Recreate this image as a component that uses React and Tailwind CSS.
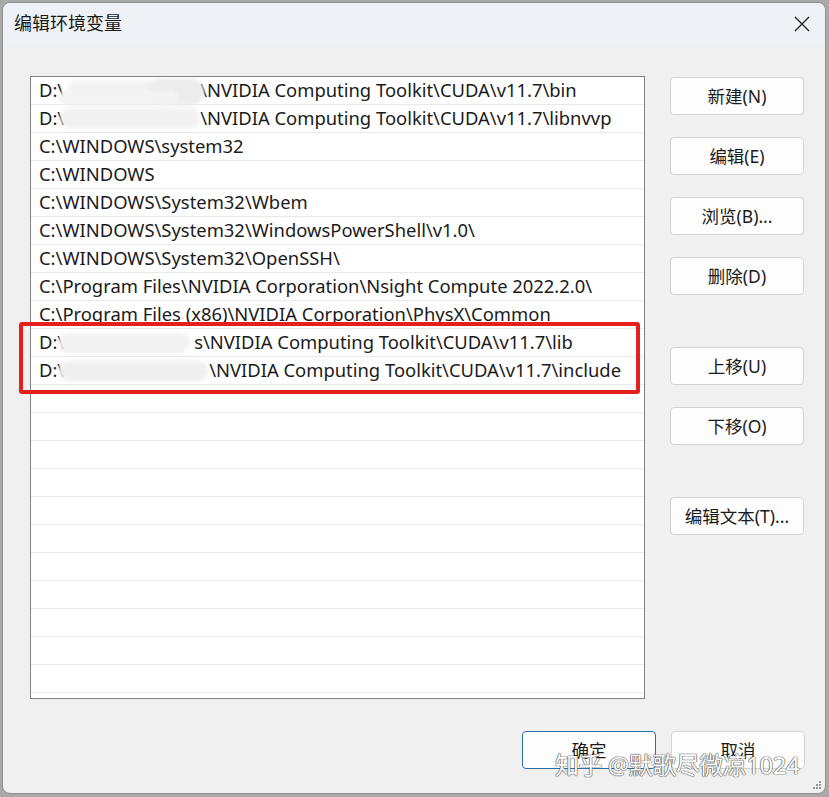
import React from "react";

const FONT = { fontFamily: '"Noto Sans", "Noto Sans CJK SC", sans-serif' };

const rows = [
  { blur: true, pre: "D:\\", gap: 136, rest: "\\NVIDIA Computing Toolkit\\CUDA\\v11.7\\bin", blob: "a" },
  { blur: true, pre: "D:\\", gap: 136, rest: "\\NVIDIA Computing Toolkit\\CUDA\\v11.7\\libnvvp", blob: "b" },
  { text: "C:\\WINDOWS\\system32" },
  { text: "C:\\WINDOWS" },
  { text: "C:\\WINDOWS\\System32\\Wbem" },
  { text: "C:\\WINDOWS\\System32\\WindowsPowerShell\\v1.0\\" },
  { text: "C:\\WINDOWS\\System32\\OpenSSH\\" },
  { text: "C:\\Program Files\\NVIDIA Corporation\\Nsight Compute 2022.2.0\\" },
  { text: "C:\\Program Files (x86)\\NVIDIA Corporation\\PhysX\\Common" },
  { blur: true, pre: "D:\\", gap: 130, rest: "s\\NVIDIA Computing Toolkit\\CUDA\\v11.7\\lib", blob: "c" },
  { blur: true, pre: "D:\\", gap: 145, rest: "\\NVIDIA Computing Toolkit\\CUDA\\v11.7\\include", blob: "d" },
];

const TOTAL_ROWS = 22;

function Blob({ kind }) {
  if (kind === "a") {
    return (
      <span className="absolute left-[-6px] top-[0px] h-[30px] w-[150px]">
        <span className="absolute left-[10px] top-[4px] h-[12px] w-[130px] rounded-full bg-[#f1f1f1] blur-[2px]" />
        <span className="absolute left-[90px] top-[2px] h-[26px] w-[56px] rounded-full bg-[#ececec] blur-[2px]" />
        <span className="absolute left-[0px] top-[14px] h-[14px] w-[120px] rounded-full bg-[#f3f3f3] blur-[2px]" />
      </span>
    );
  }
  if (kind === "b") {
    return <span className="absolute left-[-4px] top-[3px] h-[20px] w-[140px] rounded-full bg-[#f1f1f1] blur-[2px]" />;
  }
  if (kind === "c") {
    return <span className="absolute left-[-6px] top-[4px] h-[20px] w-[132px] rounded-full bg-[#f2f2f2] blur-[2px]" />;
  }
  return <span className="absolute left-[-6px] top-[4px] h-[20px] w-[150px] rounded-full bg-[#efefef] blur-[2px]" />;
}

function Row({ r }) {
  return (
    <div className="flex h-[28px] shrink-0 items-center border-b border-[#e9e9e9] pl-[8px] text-[18.4px] leading-none text-[#1b1b1b] whitespace-nowrap">
      {r ? (
        r.blur ? (
          <>
            <span>{r.pre}</span>
            <span className="relative inline-block h-[28px]" style={{ width: r.gap }}>
              <Blob kind={r.blob} />
            </span>
            <span>{r.rest}</span>
          </>
        ) : (
          <span>{r.text}</span>
        )
      ) : null}
    </div>
  );
}

function Btn({ children, primary }) {
  return (
    <div
      className={
        "flex h-[38px] w-[134px] shrink-0 items-center justify-center rounded-[4px] bg-[#fdfdfd] text-[17.5px] text-[#1b1b1b] " +
        (primary ? "border border-[#2a6fa8]" : "border border-[#d3d3d3]")
      }
    >
      {children}
    </div>
  );
}

export default function App() {
  const all = Array.from({ length: TOTAL_ROWS }, (_, i) => rows[i]);
  return (
    <div className="h-[797px] w-[829px] overflow-hidden bg-[#a9a9a9] p-[2px] pr-[3px] pb-[3px]" style={FONT}>
      <div className="relative flex h-full w-full flex-col overflow-hidden rounded-[8px] border border-[#8e8e8e] bg-[#f0f0f0]">
        {/* title bar */}
        <div className="flex h-[41px] shrink-0 items-center justify-between bg-[#eef2f6] pl-[11px] pr-[14px]">
          <span className="text-[18px] text-[#1a1a1a]">编辑环境变量</span>
          <svg width="18" height="18" viewBox="0 0 18 18" className="mt-[1px]">
            <path d="M2 2 L16 16 M16 2 L2 16" stroke="#222" strokeWidth="1.4" fill="none" />
          </svg>
        </div>
        {/* body */}
        <div className="flex flex-1 flex-col pl-[27px] pr-[20px] pt-[32px]">
          <div className="flex">
            <div className="relative">
              <div className="flex h-[623px] w-[615px] flex-col overflow-hidden border border-[#838383] bg-white">
                {all.map((r, i) => (
                  <Row key={i} r={r} />
                ))}
              </div>
              {/* red annotation */}
              <div className="pointer-events-none absolute left-[-11px] top-[246px] h-[72px] w-[621px] rounded-[3px] border-[4px] border-[#e3201b]" />
            </div>
            <div className="ml-[25px] flex flex-col pt-[1px]">
              <Btn>新建(N)</Btn>
              <div className="h-[22px]" />
              <Btn>编辑(E)</Btn>
              <div className="h-[22px]" />
              <Btn>浏览(B)...</Btn>
              <div className="h-[22px]" />
              <Btn>删除(D)</Btn>
              <div className="h-[52px]" />
              <Btn>上移(U)</Btn>
              <div className="h-[22px]" />
              <Btn>下移(O)</Btn>
              <div className="h-[52px]" />
              <Btn>编辑文本(T)...</Btn>
            </div>
          </div>
          <div className="mt-[32px] flex justify-end gap-[15px]">
            <Btn primary>确定</Btn>
            <Btn>取消</Btn>
          </div>
        </div>
        {/* watermark */}
        <div className="pointer-events-none absolute left-[552px] top-[744px] whitespace-nowrap text-[24px] tracking-[-0.5px] text-white [text-shadow:0_0_1px_#444,0_0_1px_#444,0_0_1px_#444]">
          知乎 @默歌尽微凉1024
        </div>
        {/* resize grip */}
        <svg className="absolute bottom-[3px] right-[3px]" width="10" height="10" viewBox="0 0 10 10">
          <rect x="7" y="1" width="2" height="2" fill="#999" />
          <rect x="4" y="4" width="2" height="2" fill="#999" />
          <rect x="7" y="4" width="2" height="2" fill="#999" />
          <rect x="1" y="7" width="2" height="2" fill="#999" />
          <rect x="4" y="7" width="2" height="2" fill="#999" />
          <rect x="7" y="7" width="2" height="2" fill="#999" />
        </svg>
      </div>
    </div>
  );
}
